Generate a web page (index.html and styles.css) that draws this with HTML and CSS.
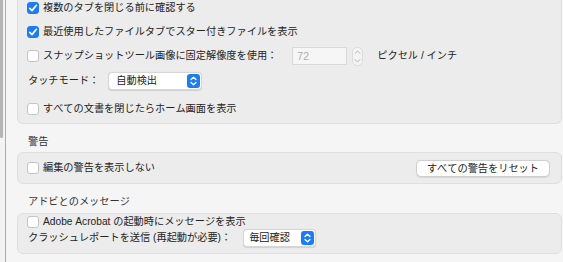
FILE: index.html
```html
<!DOCTYPE html>
<html lang="ja">
<head>
<meta charset="utf-8">
<link rel="stylesheet" href="styles.css">
</head>
<body>
<div class="window">
  <div class="gutter"><div class="thumb"></div></div>
  <div class="divider"></div>
  <main class="prefs">
    <section class="group group-top">
      <div class="row">
        <span class="check on"><svg viewBox="0 0 12 12"><path d="M2.8 6.3 L5 8.6 L9.3 3.3"/></svg></span>
        <span class="label">複数のタブを閉じる前に確認する</span>
      </div>
      <div class="row">
        <span class="check on"><svg viewBox="0 0 12 12"><path d="M2.8 6.3 L5 8.6 L9.3 3.3"/></svg></span>
        <span class="label">最近使用したファイルタブでスター付きファイルを表示</span>
      </div>
      <div class="row">
        <span class="check"></span>
        <span class="label">スナップショットツール画像に固定解像度を使用：</span>
        <span class="numfield">72</span>
        <span class="stepper"><svg viewBox="0 0 11 19"><path d="M3 6.5 L5.5 4 L8 6.5 M3 12.5 L5.5 15 L8 12.5"/></svg></span>
        <span class="unit">ピクセル / インチ</span>
      </div>
      <div class="row row-popup">
        <span class="plain">タッチモード：</span>
        <span class="popup popup-touch"><span class="popup-text">自動検出</span><span class="popup-arrows"><svg viewBox="0 0 13 14"><path d="M4 5.5 L6.5 3.3 L9 5.5 M4 8.5 L6.5 10.7 L9 8.5"/></svg></span></span>
      </div>
      <div class="row row-last">
        <span class="check"></span>
        <span class="label">すべての文書を閉じたらホーム画面を表示</span>
      </div>
    </section>

    <h2 class="section-title">警告</h2>
    <section class="group group-warn">
      <div class="row">
        <span class="check"></span>
        <span class="label">編集の警告を表示しない</span>
        <span class="spacer"></span>
        <span class="button">すべての警告をリセット</span>
      </div>
    </section>

    <h2 class="section-title">アドビとのメッセージ</h2>
    <section class="group group-msg">
      <div class="row row-first">
        <span class="check"></span>
        <span class="label">Adobe Acrobat の起動時にメッセージを表示</span>
      </div>
      <div class="row row-popup">
        <span class="plain">クラッシュレポートを送信 (再起動が必要)：</span>
        <span class="popup popup-crash"><span class="popup-text">毎回確認</span><span class="popup-arrows"><svg viewBox="0 0 13 14"><path d="M4 5.5 L6.5 3.3 L9 5.5 M4 8.5 L6.5 10.7 L9 8.5"/></svg></span></span>
      </div>
    </section>
  </main>
</div>
</body>
</html>
```

FILE: styles.css
```css
html, body {
  margin: 0;
  padding: 0;
}
body {
  width: 563px;
  height: 262px;
  overflow: hidden;
  background: #f5f5f5;
  font-family: "Liberation Sans", "Noto Sans CJK JP", sans-serif;
  font-size: 10.2px;
  font-kerning: none;
  color: #232323;
}
.window {
  display: flex;
  height: 262px;
}
.gutter {
  width: 5px;
  background: #f3f3f3;
  flex: none;
}
.thumb {
  width: 3px;
  height: 138px;
  background: #b4b4b4;
  border-radius: 0 0 2px 2px;
}
.divider {
  width: 1px;
  background: #8cb1ee;
  flex: none;
}
.prefs {
  flex: 1;
  padding: 0 1px 0 11px;
  display: flex;
  flex-direction: column;
}
.group {
  background: #ececec;
  border: 1px solid #dfdfdf;
  border-radius: 6px;
  padding: 0 11px 0 9px;
  display: flex;
  flex-direction: column;
}
.group-top {
  border-top: none;
  border-radius: 0 0 6px 6px;
  gap: 8px;
  padding-bottom: 6px;
}
.row {
  display: flex;
  align-items: center;
  height: 16px;
  line-height: 14px;
  white-space: nowrap;
}
.row-popup {
  height: 18px;
}
.row-last {
  margin-top: 3px;
}
.check {
  width: 12px;
  height: 12px;
  box-sizing: border-box;
  border: 1px solid #c4c4c4;
  background: #fff;
  border-radius: 3px;
  margin-right: 4px;
  flex: none;
  display: flex;
}
.check.on {
  background: #1b7cf4;
  border-color: #1b7cf4;
}
.check svg {
  width: 12px;
  height: 12px;
  margin: -1px;
}
.check svg path {
  fill: none;
  stroke: #fff;
  stroke-width: 1.7;
  stroke-linecap: round;
  stroke-linejoin: round;
}
.plain {
  padding-left: 1px;
}
.numfield {
  margin-left: 15px;
  width: 55px;
  height: 18px;
  box-sizing: border-box;
  background: #f6f6f6;
  border: 1px solid #d9d9d9;
  color: #b0b0b0;
  font-size: 10.5px;
  line-height: 16px;
  padding-left: 4px;
}
.stepper {
  margin-left: 5px;
  width: 11px;
  height: 19px;
  box-sizing: border-box;
  border: 1px solid #dcdcdc;
  border-radius: 5px;
  background: #f4f4f4;
  display: flex;
}
.stepper svg {
  width: 11px;
  height: 19px;
  margin: -1px;
}
.stepper svg path {
  fill: none;
  stroke: #b4b4b4;
  stroke-width: 1;
  stroke-linecap: round;
  stroke-linejoin: round;
}
.unit {
  margin-left: 14px;
}
.popup {
  height: 18px;
  box-sizing: border-box;
  background: #fff;
  border: 1px solid #d6d6d6;
  border-radius: 4px;
  box-shadow: 0 0.5px 1px rgba(0,0,0,0.12);
  display: flex;
  align-items: center;
  padding: 0 1px 0 7px;
}
.popup-touch {
  margin-left: 9px;
  width: 94px;
}
.popup-crash {
  margin-left: 12px;
  width: 73px;
  padding-left: 5px;
}
.popup-text {
  flex: 1;
}
.popup-arrows {
  width: 13px;
  height: 14px;
  background: #1b7cf4;
  border-radius: 3px;
  display: flex;
}
.popup-arrows svg {
  width: 13px;
  height: 14px;
}
.popup-arrows svg path {
  fill: none;
  stroke: #fff;
  stroke-width: 1.3;
  stroke-linecap: round;
  stroke-linejoin: round;
}
.section-title {
  margin: 0;
  font-size: 10.2px;
  font-weight: normal;
  color: #333;
  line-height: 14px;
  padding: 11px 0 3px 11px;
}
.group-warn {
  height: 32px;
  box-sizing: border-box;
  justify-content: center;
}
.spacer {
  flex: 1;
}
.button {
  height: 17px;
  box-sizing: border-box;
  background: #fff;
  border: 1px solid #cfcfcf;
  border-radius: 5px;
  box-shadow: 0 0.5px 1px rgba(0,0,0,0.1);
  padding: 0 10px;
  display: flex;
  align-items: center;
  margin-top: 1px;
}
.group-msg {
  margin-top: 1px;
  padding-top: 1px;
  padding-bottom: 6px;
}
.row-first {
  height: 14px;
}
```
